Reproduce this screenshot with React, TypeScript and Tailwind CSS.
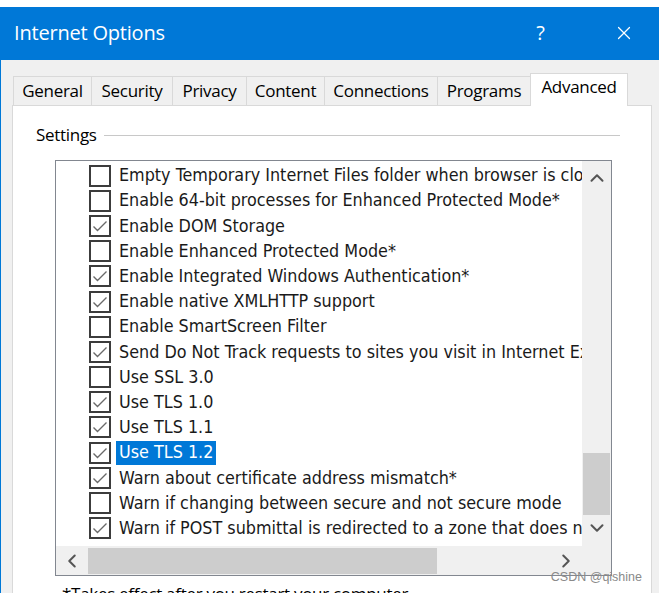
import { ChevronUp, ChevronDown, ChevronLeft, ChevronRight, X } from "lucide-react";

const tabs = [
  { label: "General", w: "w-[78px]" },
  { label: "Security", w: "w-[81px]" },
  { label: "Privacy", w: "w-[74px]" },
  { label: "Content", w: "w-[78px]" },
  { label: "Connections", w: "w-[113px]" },
  { label: "Programs", w: "w-[93px]" },
];

const settings = [
  { label: "Empty Temporary Internet Files folder when browser is closed", checked: false },
  { label: "Enable 64-bit processes for Enhanced Protected Mode*", checked: false },
  { label: "Enable DOM Storage", checked: true },
  { label: "Enable Enhanced Protected Mode*", checked: false },
  { label: "Enable Integrated Windows Authentication*", checked: true },
  { label: "Enable native XMLHTTP support", checked: true },
  { label: "Enable SmartScreen Filter", checked: false },
  { label: "Send Do Not Track requests to sites you visit in Internet Explorer", checked: true },
  { label: "Use SSL 3.0", checked: false },
  { label: "Use TLS 1.0", checked: true },
  { label: "Use TLS 1.1", checked: true },
  { label: "Use TLS 1.2", checked: true, selected: true },
  { label: "Warn about certificate address mismatch*", checked: true },
  { label: "Warn if changing between secure and not secure mode", checked: false },
  { label: "Warn if POST submittal is redirected to a zone that does not permit posting", checked: true },
];

function CheckBox({ checked }: { checked: boolean }) {
  return (
    <div className="w-[22px] h-[22px] shrink-0 border-2 border-[#3c3c3c] bg-white flex items-center justify-center">
      {checked && (
        <svg width="16" height="12" viewBox="0 0 16 12" fill="none">
          <path d="M1.5 6.5 L5.5 10.5 L14.5 1.5" stroke="#6a6a6a" strokeWidth="1.4" />
        </svg>
      )}
    </div>
  );
}

export default function App() {
  return (
    <div className="w-[659px] h-[593px] bg-white overflow-hidden pt-[7px]">
      <div className="h-[586px] border-l border-[#0078d7] bg-[#f0f0f0] flex flex-col">
        {/* title bar */}
        <div className="h-[53px] shrink-0 bg-[#0078d7] flex items-center pl-[13px] pb-[1px] text-white font-['Open_Sans',sans-serif]">
          <span className="text-[20px] tracking-[-0.2px]">Internet Options</span>
          <span className="ml-auto text-[20px] mr-[68px]">?</span>
          <X className="w-[22px] h-[22px] mr-[24px]" strokeWidth={1.3} />
        </div>

        {/* tabs */}
        <div className="pl-[12px] pt-[12px] flex items-end h-[45px] shrink-0 font-['Open_Sans',sans-serif] text-[17px] text-black">
          {tabs.map((t) => (
            <div
              key={t.label}
              className={`${t.w} h-[29px] border-t border-l border-[#d9d9d9] flex items-center justify-center pb-[1px] tracking-[-0.3px]`}
            >
              {t.label}
            </div>
          ))}
          <div className="w-[98px] h-[33px] bg-white border-t border-l border-r border-[#d9d9d9] flex items-start justify-center relative top-[1px] z-10 tracking-[-0.3px]">
            Advanced
          </div>
        </div>

        {/* panel */}
        <div className="ml-[11px] w-[640px] flex-1 bg-white border border-[#d9d9d9] font-['Open_Sans',sans-serif]">
          <div className="flex items-center h-[30px] mt-[14px] pl-[23px] pr-[31px]">
            <span className="text-[17px] tracking-[-0.3px]">Settings</span>
            <div className="flex-1 h-px bg-[#c8c8c8] ml-[7px] mt-[1px]"></div>
          </div>

          <div className="ml-[42px] mt-[10px] w-[557px] h-[416px] border border-[#828790] flex flex-col">
            <div className="flex h-[385px]">
              <div className="flex-1 overflow-hidden pt-[2px] font-['DejaVu_Sans_Condensed','DejaVu_Sans',sans-serif] text-[17.8px] text-[#1a1a1a]">
                {settings.map((s) => (
                  <div key={s.label} className="h-[25.2px] flex items-center pl-[33px] whitespace-nowrap">
                    <CheckBox checked={s.checked} />
                    <span
                      className={`ml-[5px] px-[3px] h-[24px] flex items-center ${
                        s.selected ? "bg-[#0078d7] text-white" : ""
                      }`}
                    >
                      {s.label}
                    </span>
                  </div>
                ))}
              </div>
              <div className="w-[29px] bg-[#f0f0f0] flex flex-col items-center">
                <ChevronUp className="w-[22px] h-[22px] mt-[6px] text-[#555]" strokeWidth={2.2} />
                <div className="flex-1"></div>
                <div className="w-[27px] h-[62px] bg-[#cdcdcd]"></div>
                <ChevronDown className="w-[22px] h-[22px] mt-[2px] mb-[7px] text-[#555]" strokeWidth={2.2} />
              </div>
            </div>
            <div className="flex-1 bg-[#f0f0f0] flex items-center">
              <ChevronLeft className="w-[22px] h-[22px] ml-[5px] text-[#555]" strokeWidth={2.2} />
              <div className="w-[349px] h-[26px] bg-[#cdcdcd] ml-[5px]"></div>
              <div className="flex-1"></div>
              <ChevronRight className="w-[22px] h-[22px] mr-[34px] text-[#555]" strokeWidth={2.2} />
            </div>
          </div>

          <div className="relative">
            <div className="pl-[49px] mt-[5px] text-[17px] tracking-[-0.3px] whitespace-nowrap">
              *Takes effect after you restart your computer
            </div>
            <div className="absolute right-[9px] top-[-13px] text-[12.5px] text-[#8a8a8a] font-['Liberation_Sans',sans-serif]">
              CSDN @qishine
            </div>
          </div>
        </div>
      </div>
    </div>
  );
}
